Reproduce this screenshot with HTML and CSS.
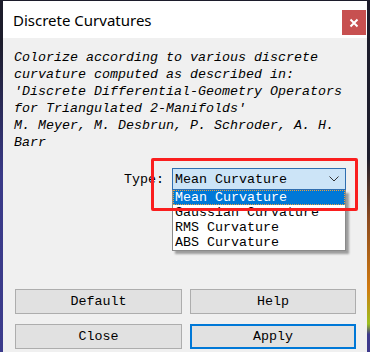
FILE: index.html
```html
<!DOCTYPE html>
<html lang="en">

<head>
    <meta charset="UTF-8">
    <meta name="viewport" content="width=device-width, initial-scale=1.0">
    <title>Discrete Curvatures</title>
    <link rel="stylesheet" href="styles.css">
</head>

<body>
    <div class="dialog">
        <div class="titlebar">
            <span class="title">Discrete Curvatures</span>
            <div class="close-btn">
                <svg width="10" height="10" viewBox="0 0 10 10">
                    <path d="M1.5 1.5 L8.5 8.5 M8.5 1.5 L1.5 8.5" stroke="#fff" stroke-width="2" fill="none" />
                </svg>
            </div>
        </div>

        <div class="content">
            <p class="desc">
                Colorize according to various discrete<br>
                curvature computed as described in:<br>
                'Discrete Differential-Geometry Operators<br>
                for Triangulated 2-Manifolds'<br>
                M. Meyer, M. Desbrun, P. Schroder, A. H.<br>
                Barr
            </p>

            <div class="type-row">
                <span class="type-label">Type:</span>
                <div class="combo-wrap">
                    <div class="combo">
                        <span>Mean Curvature</span>
                        <svg width="10" height="6" viewBox="0 0 10 6">
                            <path d="M0.5 0.5 L5 5 L9.5 0.5" stroke="#333" stroke-width="1" fill="none" />
                        </svg>
                    </div>
                    <ul class="combo-list">
                        <li class="selected">Mean Curvature</li>
                        <li>Gaussian Curvature</li>
                        <li>RMS Curvature</li>
                        <li>ABS Curvature</li>
                    </ul>
                </div>
            </div>

            <div class="buttons">
                <div class="btn">Default</div>
                <div class="btn">Help</div>
                <div class="btn">Close</div>
                <div class="btn default">Apply</div>
            </div>

            <!-- annotation box drawn over the combo -->
            <div class="highlight"></div>
        </div>
    </div>
</body>

</html>
```

FILE: styles.css
```css
* {
    padding: 0;
    margin: 0;
    box-sizing: border-box;
}

body {
    width: 370px;
    height: 352px;
    overflow: hidden;
    background:
        linear-gradient(to bottom, #1d1d2c 0%, #1d1d2c 45%, #8a4a20 62%, #d07a10 82%, #9cc020 92%, #3e3a8c 95%) right top / 4px 100% no-repeat,
        linear-gradient(to bottom, #1c1c2b 0%, #1c1c2b 12%, #3a3a88 50%, #3c3c8c 100%);
}

.dialog {
    width: 364px;
    height: 351px;
    margin: 1px 0 0 3px;
    display: flex;
    flex-direction: column;
    background: #f0f0f0;
}

.titlebar {
    height: 37px;
    background: #fff;
    display: flex;
    align-items: center;
    justify-content: space-between;
}

.title {
    font-family: "Noto Sans", sans-serif;
    font-size: 15px;
    color: #000;
    padding-left: 10px;
}

.close-btn {
    align-self: flex-start;
    width: 24px;
    height: 25px;
    margin: 9px 1px 0 0;
    background: #c75050;
    display: flex;
    align-items: center;
    justify-content: center;
}

.content {
    flex: 1;
    position: relative;
    display: flex;
    flex-direction: column;
    font-family: "Liberation Mono", monospace;
    font-size: 13.33px;
    color: #000;
}

.desc {
    font-style: italic;
    line-height: 17px;
    padding: 11px 0 0 11px;
}

.type-row {
    display: flex;
    justify-content: flex-end;
    align-items: center;
    margin-top: 17px;
    padding-right: 21px;
}

.type-label {
    margin-right: 8px;
}

.combo-wrap {
    position: relative;
    width: 174px;
}

.combo {
    height: 22px;
    border: 1px solid #2f6eb0;
    background: #cce4f7;
    display: flex;
    align-items: center;
    justify-content: space-between;
    padding: 0 6px 0 2px;
}

.combo-list {
    position: absolute;
    left: 0;
    top: 100%;
    width: 174px;
    list-style: none;
    background: #fff;
    border: 1px solid #8a8a8a;
    border-top: none;
    box-shadow: 3px 3px 2px rgba(0, 0, 0, 0.35);
}

.combo-list li {
    height: 15px;
    line-height: 15px;
    padding-left: 2px;
}

.combo-list .selected {
    background: #0078d7;
    color: #fff;
    outline: 1px dotted #e8a040;
    outline-offset: -1px;
}

.buttons {
    margin-top: auto;
    display: grid;
    grid-template-columns: 167px 166px;
    gap: 10px 8px;
    padding: 0 11px 3px 12px;
}

.btn {
    height: 25px;
    background: #e1e1e1;
    border: 1px solid #adadad;
    display: flex;
    align-items: center;
    justify-content: center;
}

.btn.default {
    border: 2px solid #0078d7;
}

.highlight {
    position: absolute;
    left: 148px;
    top: 120px;
    width: 207px;
    height: 53px;
    border: 3px solid #fa1e1e;
    border-radius: 2px;
}
```
